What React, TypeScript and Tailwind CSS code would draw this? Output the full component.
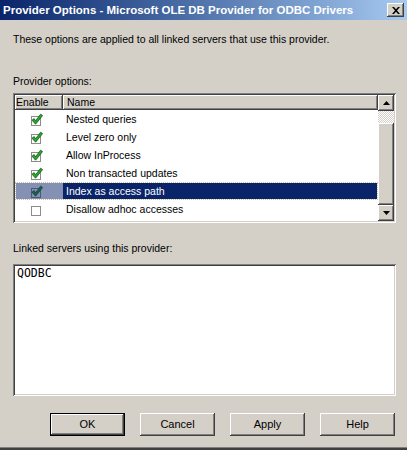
import React from "react";

const raised =
  "shadow-[inset_-1px_-1px_#404040,inset_1px_1px_#ffffff,inset_-2px_-2px_#808080,inset_2px_2px_#d4d0c8]";
const sunken =
  "shadow-[inset_1px_1px_#808080,inset_-1px_-1px_#ffffff,inset_2px_2px_#404040,inset_-2px_-2px_#d4d0c8]";

function Check({ checked }: { checked: boolean }) {
  return (
    <svg width="13" height="13" viewBox="0 0 13 13" className="block">
      <rect x="1.5" y="3.5" width="9" height="9" fill="#ffffff" stroke="#8c8c8c" strokeWidth="1" />
      {checked && (
        <polygon
          points="2,7.2 4.2,5.6 5.6,7.8 10.6,1.2 12.6,2.6 5.6,11.2"
          fill="#2fa32f"
          stroke="#0e5a0e"
          strokeWidth="0.8"
          strokeLinejoin="round"
        />
      )}
    </svg>
  );
}

const rows = [
  { name: "Nested queries", checked: true },
  { name: "Level zero only", checked: true },
  { name: "Allow InProcess", checked: true },
  { name: "Non transacted updates", checked: true },
  { name: "Index as access path", checked: true, selected: true },
  { name: "Disallow adhoc accesses", checked: false },
];

function Button({ label, def }: { label: string; def?: boolean }) {
  return (
    <div
      className={`w-[75px] h-[23px] flex items-center justify-center text-[11px] text-black bg-[#d4d0c8] ${
        def ? "border border-black" : ""
      }`}
    >
      <div className={`w-full h-full flex items-center justify-center ${raised}`}>{label}</div>
    </div>
  );
}

export default function App() {
  return (
    <div className="w-[407px] h-[450px] bg-[#d4d0c8] flex flex-col overflow-hidden font-['Liberation_Sans',Arial,sans-serif] text-black">
      {/* Title bar */}
      <div className="h-[20px] shrink-0 bg-linear-to-r from-[#0a246a] to-[#a6caf0] flex items-center justify-between pl-[3px] pr-[3px]">
        <span className="text-white font-bold text-[11.5px] leading-[20px] whitespace-nowrap">
          Provider Options - Microsoft OLE DB Provider for ODBC Drivers
        </span>
        <div className={`w-[17px] h-[14px] bg-[#d4d0c8] flex items-center justify-center ${raised}`}>
          <svg width="8" height="7" viewBox="0 0 8 7">
            <path d="M0 0h2l2 2.2L6 0h2L5 3.5 8 7H6L4 4.8 2 7H0l3-3.5z" fill="#000" />
          </svg>
        </div>
      </div>

      <div className="flex flex-col pl-[13px] flex-1">
        <div className="mt-[13px] h-[12px] leading-[12px] text-[10.5px] whitespace-nowrap">
          These options are applied to all linked servers that use this provider.
        </div>
        <div className="mt-[30px] h-[12px] leading-[12px] text-[10.5px]">Provider options:</div>

        {/* Table */}
        <div className={`mt-[6px] w-[383px] h-[130px] p-[2px] bg-white flex ${sunken}`}>
          <div className="flex-1 flex flex-col bg-white">
            <div className="h-[15px] flex text-[10.5px] leading-[15px]">
              <div className={`w-[48px] pl-[1px] bg-[#d4d0c8] ${raised}`}>Enable</div>
              <div className={`flex-1 pl-[4px] bg-[#d4d0c8] ${raised}`}>Name</div>
            </div>
            {rows.map((r) => (
              <div
                key={r.name}
                className={`h-[18px] flex text-[10.5px] leading-[16px] ${
                  r.selected ? "border border-dotted border-[#c8c0a0]" : "border border-transparent"
                }`}
              >
                <div className="w-[47px] relative flex items-center pl-[14px]">
                  <Check checked={r.checked} />
                  {r.selected && <div className="absolute inset-0 bg-[#0a246a]/50" />}
                </div>
                <div
                  className={`flex-1 pl-[3px] ${r.selected ? "bg-[#0a246a] text-white" : ""}`}
                >
                  {r.name}
                </div>
              </div>
            ))}
          </div>
          {/* Scrollbar */}
          <div className="w-[16px] flex flex-col">
            <div className={`h-[16px] bg-[#d4d0c8] flex items-center justify-center ${raised}`}>
              <svg width="7" height="4" viewBox="0 0 7 4">
                <path d="M3.5 0L7 4H0z" fill="#000" />
              </svg>
            </div>
            <div className="h-[12px] bg-[repeating-conic-gradient(#ffffff_0%_25%,#d4d0c8_0%_50%)] bg-size-[2px_2px]" />
            <div className={`flex-1 bg-[#d4d0c8] ${raised}`} />
            <div className={`h-[16px] bg-[#d4d0c8] flex items-center justify-center ${raised}`}>
              <svg width="7" height="4" viewBox="0 0 7 4">
                <path d="M0 0H7L3.5 4z" fill="#000" />
              </svg>
            </div>
          </div>
        </div>

        <div className="mt-[19px] h-[12px] leading-[12px] text-[10.5px]">Linked servers using this provider:</div>

        <div className={`mt-[10px] w-[383px] h-[132px] bg-white pl-[4px] pt-[3px] ${sunken}`}>
          <div className="font-['DejaVu_Sans_Mono',monospace] text-[11.5px] leading-[13px]">QODBC</div>
        </div>

        <div className="mt-[17px] flex gap-[15px] pl-[37px]">
          <Button label="OK" def />
          <Button label="Cancel" />
          <Button label="Apply" />
          <Button label="Help" />
        </div>
        <div className="flex-1" />
      </div>
      <div className="h-[1px] bg-[#808080] shrink-0" />
      <div className="h-[2px] bg-[#404040] shrink-0" />
    </div>
  );
}
